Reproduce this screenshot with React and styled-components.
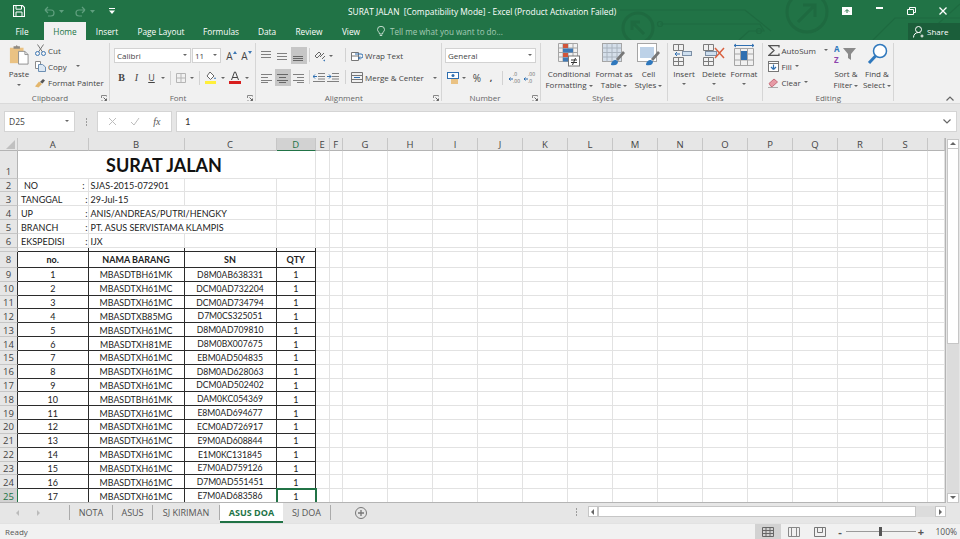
import React from 'react'
import styled, { createGlobalStyle } from 'styled-components'

const GREEN = '#217346'
const UI_FONT = '"Open Sans", "Noto Sans", sans-serif'

const Global = createGlobalStyle`
    html, body { margin: 0; padding: 0; background: #e6e6e6; }
    * { box-sizing: border-box; }
`

const Page = styled.div`
    width: 960px;
    height: 539px;
    display: flex;
    flex-direction: column;
    overflow: hidden;
    font-family: ${UI_FONT};
    color: #444;
    background: #e6e6e6;
`

/* title bar */
const TitleBar = styled.div`
    position: relative;
    height: 22px;
    display: grid;
    grid-template-columns: 348px 1fr auto;
    align-items: center;
    color: #fff;
`
const Circuit = styled.svg`
    position: absolute;
    left: 600px;
    top: 0;
    pointer-events: none;
`
const Header = styled.div`
    position: relative;
    background: ${GREEN};
    overflow: hidden;
    flex: none;
`
const Qat = styled.div`
    display: flex;
    align-items: center;
    padding-left: 13px;
    position: relative;
`
const QatSlot = styled.div`
    width: ${p => p.$w}px;
    display: flex;
    align-items: center;
`
const WindowTitle = styled.div`
    font-size: 8.4px;
    white-space: pre;
    position: relative;
`
const WinControls = styled.div`
    display: flex;
    position: relative;
    padding-right: 1px;
`
const WinBtn = styled.div`
    width: 32px;
    display: flex;
    justify-content: center;
`
const TabRow = styled.div`
    height: 18px;
    display: flex;
    align-items: stretch;
    position: relative;
`
const Tab = styled.div`
    width: ${p => p.$w}px;
    display: flex;
    align-items: center;
    justify-content: center;
    padding-top: 1px;
    font-size: 8.3px;
    color: ${p => (p.$active ? GREEN : '#fff')};
    background: ${p => (p.$active ? '#f1f1f1' : 'transparent')};
`
const TellMe = styled.div`
    display: flex;
    align-items: center;
    gap: 5px;
    padding: 1px 0 0 7px;
    font-size: 8.1px;
    color: #a6cbb6;
`
const Share = styled.div`
    margin-left: auto;
    width: 52px;
    margin-top: 1px;
    background: #1b5e3a;
    color: #fff;
    font-size: 8px;
    display: flex;
    align-items: center;
    gap: 3px;
    padding-left: 5px;
`

/* ribbon */
const Ribbon = styled.div`
    position: relative;
    height: 64px;
    background: #f1f1f1;
    display: flex;
    flex: none;
    border-bottom: 1px solid #dadada;
`
const Group = styled.div`
    width: ${p => p.$w}px;
    flex: none;
    display: flex;
    flex-direction: column;
    position: relative;
    &::after {
        content: '';
        position: absolute;
        right: 0;
        top: 3px;
        bottom: 2px;
        width: 1px;
        background: #d6d6d6;
    }
`
const GroupBody = styled.div`
    height: 52px;
    display: flex;
    gap: ${p => p.$gap || 0}px;
    padding: ${p => p.$top || 0}px 0 0 ${p => p.$left || 0}px;
`
const GroupLabel = styled.div`
    height: 11px;
    font-size: 8px;
    line-height: 12px;
    color: #666;
    text-align: center;
    position: relative;
    padding-right: ${p => p.$shift || 0}px;
`
const Launcher = styled.svg`
    position: absolute;
    right: 3px;
    top: 3px;
`
const Caret = styled.span`
    display: inline-block;
    width: 0;
    height: 0;
    flex: none;
    margin: ${p => p.$m || '0 0 1px 3px'};
    border-left: 2.5px solid transparent;
    border-right: 2.5px solid transparent;
    border-top: 2.5px solid #666;
`
const PasteCol = styled.div`
    width: 30px;
    display: flex;
    flex-direction: column;
    align-items: center;
    padding-top: 4px;
    font-size: 8px;
    line-height: 11px;
    color: #444;
    & > svg { margin-bottom: 2px; }
`
const SmallCol = styled.div`
    display: flex;
    flex-direction: column;
    padding-top: 2px;
    width: ${p => p.$w || 'auto'};
`
const SmallRow = styled.div`
    height: 16px;
    display: flex;
    align-items: center;
    gap: 2px;
    font-size: 8px;
    white-space: nowrap;
    color: #444;
`
const IconSlot = styled.span`
    width: ${p => p.$w || 12}px;
    display: flex;
    justify-content: center;
    flex: none;
`
const ToolRows = styled.div`
    display: flex;
    flex-direction: column;
    gap: 5px;
`
const ToolRow = styled.div`
    display: flex;
    align-items: center;
    height: 17px;
`
const Combo = styled.div`
    width: ${p => p.$w}px;
    height: 15px;
    margin-left: ${p => p.$ml || 0}px;
    background: #fff;
    border: 1px solid #d2d2d2;
    display: flex;
    align-items: center;
    justify-content: space-between;
    padding: 0 3px 0 2px;
    font-size: 8px;
    color: #444;
`
const Tool = styled.div`
    width: ${p => p.$w || 15}px;
    height: 17px;
    flex: none;
    display: flex;
    align-items: center;
    justify-content: center;
    font-size: ${p => p.$size || 9}px;
    font-weight: ${p => (p.$bold ? 700 : 400)};
    font-style: ${p => (p.$italic ? 'italic' : 'normal')};
    text-decoration: ${p => (p.$under ? 'underline' : 'none')};
    font-family: ${p => (p.$serif ? '"Liberation Serif", serif' : UI_FONT)};
    color: #444;
    background: ${p => (p.$on ? '#c6c6c6' : 'transparent')};
`
const GrowBox = styled.div`
    display: flex;
    margin-left: 3px;
`
const Sep = styled.div`
    width: 1px;
    height: 14px;
    margin: 0 ${p => p.$m || 4}px;
    flex: none;
    background: #d2d2d2;
`
const SepCol = styled.div`
    display: flex;
    flex-direction: column;
    gap: 8px;
    padding-top: 1px;
`
const BigBtn = styled.div`
    width: ${p => p.$w}px;
    flex: none;
    display: flex;
    flex-direction: column;
    align-items: center;
    padding-top: 3px;
    font-size: 8px;
    line-height: 11px;
    color: #444;
    text-align: center;
    white-space: nowrap;
`
const BigIcon = styled.div`
    height: 24.5px;
    display: flex;
    align-items: flex-start;
    justify-content: center;
`
const Collapse = styled.svg`
    position: absolute;
    right: 6px;
    bottom: 2px;
`

/* formula bar */
const FormulaBar = styled.div`
    height: 34px;
    padding: 7px 3px 6px 4px;
    display: flex;
    align-items: stretch;
    background: #e6e6e6;
    flex: none;
`
const NameBox = styled.div`
    width: 71px;
    background: #fff;
    border: 1px solid #d4d4d4;
    display: flex;
    align-items: center;
    justify-content: space-between;
    padding: 0 5px 0 4px;
    font-size: 8.5px;
    color: #444;
`
const Dots = styled.div`
    width: 22px;
    display: flex;
    flex-direction: column;
    align-items: center;
    justify-content: center;
    gap: 1px;
    & > i { width: 1px; height: 2px; background: #9c9c9c; }
`
const FxBox = styled.div`
    width: 75px;
    background: #fff;
    border: 1px solid #d4d4d4;
    display: flex;
    align-items: center;
    justify-content: space-around;
    padding: 0 4px;
`
const Fx = styled.span`
    font: italic 10px "Liberation Serif", serif;
    color: #555;
`
const FormulaInput = styled.div`
    flex: 1;
    margin-left: 4px;
    background: #fff;
    border: 1px solid #d4d4d4;
    display: flex;
    align-items: center;
    justify-content: space-between;
    padding: 0 5px 0 8px;
    font: 9.5px Lato, sans-serif;
    color: #333;
`

/* sheet */
const SheetArea = styled.div`
    height: 365px;
    display: flex;
    background: #e6e6e6;
    flex: none;
`
const Grid = styled.div`
    width: 946px;
    height: 365px;
    overflow: hidden;
    display: grid;
    grid-template-columns: 18px 70.5px 96px 92px 39.5px 13.5px 13.5px repeat(13, 45px) 1fr;
    grid-template-rows: 13px 27.5px repeat(5, 13.9px) 4px 16px repeat(17, 13.83px);
    background: #fff;
    border-right: 1px solid #b4b4b4;
    border-bottom: 1px solid #b4b4b4;
    font-family: Lato, sans-serif;
    font-size: 9px;
    color: #222;
`
const ColHead = styled.div`
    background: ${p => (p.$sel ? '#d2d2d2' : '#e6e6e6')};
    border-right: 1px solid #c6c6c6;
    border-bottom: 1px solid ${p => (p.$sel ? GREEN : '#b4b4b4')};
    color: ${p => (p.$sel ? GREEN : '#444')};
    font: 9.5px ${UI_FONT};
    display: flex;
    align-items: center;
    justify-content: center;
`
const Corner = styled(ColHead)`
    position: relative;
    &::after {
        content: '';
        position: absolute;
        right: 2px;
        bottom: 1px;
        border-left: 9px solid transparent;
        border-bottom: 9px solid #c0c0c0;
    }
`
const RowHead = styled.div`
    background: ${p => (p.$sel ? '#d2d2d2' : '#e6e6e6')};
    border-right: 1px solid ${p => (p.$sel ? GREEN : p.$dark ? '#2b2b2b' : '#b4b4b4')};
    border-bottom: 1px solid #c6c6c6;
    color: ${p => (p.$sel ? GREEN : '#444')};
    font: 9.5px ${UI_FONT};
    padding-top: 1px;
    display: flex;
    align-items: ${p => (p.$low ? 'flex-end' : 'center')};
    justify-content: center;
    overflow: hidden;
`
const Cell = styled.div`
    grid-column: span ${p => p.$span || 1};
    border-right: 1px solid ${p => (p.$boxed ? '#2b2b2b' : '#e2e2e2')};
    border-bottom: 1px solid ${p => (p.$boxed ? '#2b2b2b' : '#e2e2e2')};
    display: flex;
    align-items: center;
    justify-content: ${p => (p.$center ? 'center' : 'flex-start')};
    font-weight: ${p => (p.$bold ? 700 : 400)};
    font-size: ${p => p.$size || 9}px;
    white-space: nowrap;
    padding: 1px 0 0 ${p => p.$pad || 0}px;
    position: relative;
`
const SheetTitle = styled(Cell)`
    font-size: 18px;
    font-weight: 700;
    color: #111;
    padding: 1px 5px 0 0;
`
const SelectedCell = styled(Cell)`
    outline: 2px solid ${GREEN};
    outline-offset: -1px;
    z-index: 1;
`
const Colon = styled.span`
    margin-left: auto;
    padding-right: ${p => p.$pr}px;
`
const VScroll = styled.div`
    flex: 1;
    display: flex;
    flex-direction: column;
    padding: 1px 1px 0;
`
const ScrollBtn = styled.div`
    flex: none;
    width: ${p => p.$w || 12}px;
    height: ${p => p.$h || 10}px;
    background: #fff;
    border: 1px solid #c6c6c6;
    display: flex;
    align-items: center;
    justify-content: center;
`
const VThumb = styled.div`
    width: 12px;
    height: 195px;
    background: #fff;
    border: 1px solid #c6c6c6;
    border-top: none;
`
const VTrack = styled.div`
    width: 12px;
    flex: 1;
    background: #dcdcdc;
`

/* sheet tabs */
const TabsBar = styled.div`
    height: 20px;
    display: flex;
    align-items: stretch;
    background: #e6e6e6;
    flex: none;
`
const TabNav = styled.div`
    width: 70px;
    display: flex;
    align-items: center;
    justify-content: flex-end;
    gap: 15px;
    padding-right: 27px;
    border-right: 1px solid #ababab;
    margin: 2px 0 3px;
`
const SheetTab = styled.div`
    width: ${p => p.$w}px;
    display: flex;
    align-items: center;
    justify-content: center;
    font-size: 9px;
    margin-bottom: ${p => (p.$active ? 0 : 3)}px;
    margin-top: ${p => (p.$active ? 0 : 2)}px;
    color: ${p => (p.$active ? GREEN : '#555')};
    font-weight: ${p => (p.$active ? 700 : 400)};
    background: ${p => (p.$active ? '#fff' : 'transparent')};
    border-bottom: ${p => (p.$active ? `2px solid ${GREEN}` : 'none')};
    border-right: ${p => (p.$active ? 'none' : '1px solid #ababab')};
`
const AddSheet = styled.div`
    margin-left: 24px;
    display: flex;
    align-items: center;
`
const HScroll = styled.div`
    margin-left: auto;
    width: 390px;
    display: flex;
    align-items: center;
    padding: 0 14px 3px 0;
`
const SplitDots = styled(Dots)`
    width: 12px;
    margin-right: 6px;
`
const HThumb = styled.div`
    width: 318px;
    height: 11px;
    background: #fff;
    border: 1px solid #c6c6c6;
`
const HTrack = styled.div`
    flex: 1;
    height: 11px;
    background: #dcdcdc;
`

/* status bar */
const StatusBar = styled.div`
    height: 16px;
    background: #f1f1f1;
    display: flex;
    align-items: center;
    font-size: 8px;
    color: #555;
    padding-left: 5px;
    flex: none;
    border-top: 1px solid #e2e2e2;
`
const ViewGroup = styled.div`
    margin-left: auto;
    display: flex;
    align-items: stretch;
    height: 100%;
`
const ViewBtn = styled.div`
    width: 26px;
    display: flex;
    align-items: center;
    justify-content: center;
    background: ${p => (p.$on ? '#d2d2d2' : 'transparent')};
`
const ZoomBar = styled.div`
    display: flex;
    align-items: center;
    width: 127px;
    padding-left: 4.5px;
    gap: 3px;
    font-size: 8.5px;
    color: #555;
`
const ZoomMark = styled.span`
    font-size: 11px;
    font-weight: 700;
    line-height: 1;
    width: 5px;
    display: flex;
    justify-content: center;
`
const Slider = styled.div`
    width: 70px;
    height: 1px;
    background: #9a9a9a;
    position: relative;
    & > i {
        position: absolute;
        left: 33px;
        top: -4px;
        width: 3px;
        height: 9px;
        background: #555;
    }
`
const ZoomValue = styled.span`
    margin-left: 9px;
`

/* icons */
const Ico = ({ w = 12, h = 12, children }) => (
    <svg width={w} height={h} viewBox={`0 0 ${w} ${h}`} fill="none">{children}</svg>
)

const Lines = ({ rows, on }) => (
    <Ico w={12} h={12}>
        {rows.map(([a, b, y], i) => (
            <line key={i} x1={a} x2={b} y1={y + 0.5} y2={y + 0.5} stroke={on ? '#666' : '#808080'} />
        ))}
    </Ico>
)

const SaveIcon = () => (
    <Ico w={12} h={12}>
        <path d="M.5.5h9l2 2v9H.5z" stroke="#fff" strokeWidth="1.2" />
        <path d="M3 1v3.2h5.5V1M3 11V7h6v4" stroke="#fff" />
    </Ico>
)
const UndoIcon = ({ flip }) => (
    <svg width="11" height="11" viewBox="0 0 11 11" fill="none" style={flip ? { transform: 'scaleX(-1)' } : undefined}>
        <path d="M1 4h6a3 3 0 0 1 0 6H4M1 4l3-3M1 4l3 3" stroke="#5f9f7e" strokeWidth="1.2" />
    </svg>
)
const SmallCaret = ({ color = '#5f9f7e' }) => (
    <svg width="5" height="3" viewBox="0 0 5 3" style={{ marginLeft: 4 }}><path d="M0 0h5L2.5 3z" fill={color} /></svg>
)
const QatCustom = () => (
    <svg width="6" height="6" viewBox="0 0 6 6"><path d="M0 0h6v1H0zM0 2.5h6L3 6z" fill="#fff" /></svg>
)
const Bulb = () => (
    <svg width="8" height="11" viewBox="0 0 8 11" fill="none">
        <path d="M2.5 8C2.5 6 .5 5.5.5 3.5a3.5 3.2 0 0 1 7 0C7.5 5.5 5.5 6 5.5 8zM2.8 9.5h2.4" stroke="#c4dccf" />
    </svg>
)
const PersonIcon = () => (
    <svg width="11" height="12" viewBox="0 0 11 12" fill="none">
        <circle cx="5.5" cy="3.5" r="3" stroke="#fff" />
        <path d="M.5 11.5c0-3 2-5 5-5 1 0 1.5.2 2 .5M7.5 10h3M9 8.5v3" stroke="#fff" />
    </svg>
)
const PresentIcon = () => (
    <Ico w={10} h={8}>
        <rect width="10" height="8" fill="#fff" />
        <path d="M3 4.5 5 2.5l2 2M5 3v3" stroke={GREEN} />
    </Ico>
)
const RestoreIcon = () => (
    <Ico w={9} h={8}>
        <path d="M.5 2.5h6v5h-6zM2.5 2.5v-2h6v5h-2" stroke="#fff" />
    </Ico>
)
const CloseIcon = () => (
    <Ico w={8} h={8}>
        <path d="M.5.5l7 7M7.5.5l-7 7" stroke="#fff" strokeWidth="1.3" />
    </Ico>
)
const LauncherIcon = () => (
    <Launcher width="6" height="6" viewBox="0 0 6 6" fill="none">
        <path d="M.5 3V.5h5M.5 5.5h1M5.5.5v1" stroke="#888" />
        <path d="M2.5 2.5l3 3M5.5 3.5v2h-2" stroke="#666" />
    </Launcher>
)
const PasteIcon = () => (
    <svg width="20" height="22" viewBox="0 0 22 24" fill="none">
        <path d="M1 4h15v17H1z" fill="#eac283" />
        <path d="M5 2.5h2.5L8.5 1l1 1.5H12V5H5z" fill="#8f8a83" />
        <path d="M10.5 8h7l3.5 3.5V22H10.5z" fill="#fff" stroke="#8a8a8a" />
        <path d="M17.5 8v3.5H21" stroke="#8a8a8a" />
    </svg>
)
const CutIcon = () => (
    <Ico w={11} h={12}>
        <path d="M2.5.5l5 7.5M8.5.5l-5 7.5" stroke="#777" />
        <circle cx="2.5" cy="9.5" r="2" stroke="#3f79b5" />
        <circle cx="8.5" cy="9.5" r="2" stroke="#3f79b5" />
    </Ico>
)
const CopyIcon = () => (
    <Ico w={11} h={11}>
        <path d="M.5.5h5v7h-5z" fill="#fff" stroke="#8a8a8a" />
        <path d="M3.5 3.5h4l3 2.5v4.5h-7z" fill="#dce7f2" stroke="#6c8fb3" />
    </Ico>
)
const BrushIcon = () => (
    <Ico w={12} h={11}>
        <path d="M1 9.5l4-5 3 2.5-3.5 3.5z" fill="#e3b66c" />
        <path d="M6 5l3-3 2 1.5-2.5 3z" fill="#555" />
    </Ico>
)
const GrowIcon = ({ up }) => (
    <Tool $w={15} $size={10}>
        A
        <svg width="4" height="3" viewBox="0 0 4 3" style={{ marginBottom: 6 }}>
            <path d={up ? 'M0 3l2-3 2 3z' : 'M0 0l2 3 2-3z'} fill="#3f79b5" />
        </svg>
    </Tool>
)
const BorderIcon = () => (
    <Ico w={10} h={10}>
        <path d="M.5.5h9v9h-9zM5 .5v9M.5 5h9" stroke="#b5b5b5" />
    </Ico>
)
const FillIcon = () => (
    <Ico w={12} h={13}>
        <path d="M5 1l4 4-3.5 3.5L2 5z" stroke="#666" fill="#fff" />
        <path d="M10 6l1 2h-2z" fill="#3f79b5" />
        <rect y="10" width="11" height="3" fill="#ffef3a" />
    </Ico>
)
const FontColorIcon = () => (
    <Ico w={12} h={13}>
        <path d="M2.5 9l3-8h1l3 8M4 6.5h4" stroke="#444" />
        <rect y="10" width="12" height="3" fill="#d81e1e" />
    </Ico>
)
const OrientIcon = () => (
    <Ico w={12} h={12}>
        <path d="M1 6l4-4 2 2-4 4zM6 7l4-4M8 9l3-3" stroke="#666" />
        <path d="M9 10.5l2-1v2z" fill="#3f79b5" />
    </Ico>
)
const IndentIcon = ({ out }) => (
    <Ico w={12} h={11}>
        <path d="M5 1.5h7M5 4.5h7M5 7h7M0 9.5h12" stroke="#808080" />
        <path d={out ? 'M0 4.5h4M0 4.5l2-2M0 4.5l2 2' : 'M0 4.5h4M4 4.5l-2-2M4 4.5l-2 2'} stroke="#2f6fb0" />
    </Ico>
)
const WrapIcon = () => (
    <Ico w={12} h={12}>
        <path d="M.5 2.5h7v8h-7zM.5 6h7" stroke="#777" fill="#fff" />
        <path d="M4 4h6a1.5 1.5 0 0 1 0 4H7.5M7.5 8L9 6.5M7.5 8L9 9.5" stroke="#2f6fb0" />
    </Ico>
)
const MergeIcon = () => (
    <Ico w={12} h={11}>
        <path d="M.5.5h11v10H.5zM.5 3.5h11M.5 7.5h11" stroke="#777" />
        <path d="M3 5.5h6" stroke="#2f6fb0" />
    </Ico>
)
const AccountingIcon = () => (
    <Ico w={12} h={12}>
        <rect x=".5" y=".5" width="11" height="6" fill="#fff" stroke="#2f6fb0" />
        <circle cx="6" cy="3.5" r="1.5" fill="#2f6fb0" />
        <rect x="4" y="7" width="7" height="5" fill="#eac283" />
    </Ico>
)
const DecimalIcon = ({ more }) => (
    <svg width="14" height="13" viewBox="0 0 14 13" fill="none">
        <text x="4" y="5" fontSize="5" fill="#666" fontFamily="Open Sans">{more ? '.00' : '.0'}</text>
        <text x="4" y="12" fontSize="5" fill="#666" fontFamily="Open Sans">{more ? '.0' : '.00'}</text>
        <path d="M0 8h4M0 8l1.5-1.5M0 8l1.5 1.5" stroke="#2f6fb0" />
    </svg>
)
const CondIcon = () => (
    <Ico w={22} h={24}>
        <path d="M.5.5h19v18H.5zM.5 5h19M.5 9.5h19M.5 14h19M5 .5v18M10 .5v18M15 .5v18" stroke="#a5a5a5" />
        <rect x="5" y="1" width="5" height="4" fill="#d1553a" />
        <rect x="5" y="5.5" width="10" height="4" fill="#3f79b5" />
        <rect x="5" y="10" width="5" height="4" fill="#d1553a" />
        <rect x="5" y="14.5" width="5" height="4" fill="#3f79b5" />
        <rect x="10.5" y="13" width="11" height="10" fill="#fff" stroke="#777" />
        <path d="M13 17h6M13 19.5h6M17.5 15l-3 7" stroke="#333" />
    </Ico>
)
const FormatTableIcon = ({ cell }) => (
    <Ico w={24} h={24}>
        <rect x=".5" y=".5" width="19" height="18" fill={cell ? '#fff' : '#d5dfea'} stroke="#a5a5a5" />
        {cell
            ? <rect x="3" y="4" width="14" height="11" fill="#bdd2e8" />
            : <path d="M.5 5h19M.5 9.5h19M.5 14h19M5 .5v18M10 .5v18M15 .5v18" stroke="#aab4bf" />}
        <path d="M14 16l7-8 2 2-7 8z" fill="#777" />
        <path d="M9 22c0-3 2-5 5-5l2 1.5c0 2.5-2 4.5-7 3.5z" fill="#2f78bd" />
    </Ico>
)
const CellOpIcon = ({ kind }) => (
    <Ico w={28} h={24}>
        <path d="M3.5 1.5h10v6h-10zM8.5 1.5v6" stroke="#7c7c7c" />
        <path d="M3.5 14.5h10v8h-10zM8.5 14.5v8M3.5 18.5h10" stroke="#7c7c7c" />
        {kind === 'insert' && <path d="M5 11h5M5 11l2-2M5 11l2 2" stroke="#2f6fb0" />}
        {kind === 'insert' && <rect x="12.5" y="8.5" width="9" height="4" stroke="#7c8fa5" fill="#cfe0f0" />}
        {kind === 'delete' && <rect x="5.5" y="8.5" width="11" height="4" stroke="#7c8fa5" fill="#cfe0f0" />}
        {kind === 'delete' && <path d="M15 5l9 10M24 5l-9 10" stroke="#d9603f" strokeWidth="1.5" />}
    </Ico>
)
const CellFormatIcon = () => (
    <Ico w={24} h={24}>
        <path d="M2 2.5h20M2 2.5L4 1M2 2.5L4 4M22 2.5L20 1M22 2.5L20 4" stroke="#2f6fb0" />
        <path d="M2.5 5.5h19v17h-19zM8.5 5.5v17M15.5 5.5v17M2.5 11h19M2.5 17h19" stroke="#a5a5a5" />
        <rect x="9" y="8" width="6" height="9" fill="#2f6fb0" />
    </Ico>
)
const SigmaIcon = () => (
    <Ico w={12} h={11}>
        <path d="M11 2.5V.7H1l5 4.8-5 4.8h10V8.500" stroke="#555" strokeWidth="1.3" />
    </Ico>
)
const FillDownIcon = () => (
    <Ico w={11} h={11}>
        <rect x=".5" y=".5" width="10" height="10" fill="#fff" stroke="#777" />
        <path d="M.5 2.5h10" stroke="#777" />
        <path d="M5.5 3.5v5M5.5 8.5L3 6M5.5 8.5L8 6" stroke="#2f6fb0" strokeWidth="1.2" />
    </Ico>
)
const EraserIcon = () => (
    <Ico w={11} h={11}>
        <path d="M1 6.5l5-4.5 3.5 3-5 4.5H3z" fill="#e79aa5" stroke="#c66d7b" />
        <path d="M0 10.5h10" stroke="#aaa" />
    </Ico>
)
const SortIcon = () => (
    <svg width="24" height="23" viewBox="0 0 24 23" fill="none">
        <text x="0" y="9" fontSize="8" fontWeight="700" fill="#2f78bd" fontFamily="Open Sans">A</text>
        <text x="0" y="20" fontSize="8" fontWeight="700" fill="#8e44ad" fontFamily="Open Sans">Z</text>
        <path d="M9 5h13l-5 6v6l-3-2v-4z" fill="#8a8a8a" />
    </svg>
)
const FindIcon = () => (
    <Ico w={21} h={22}>
        <circle cx="13" cy="8" r="6.5" stroke="#2f78bd" strokeWidth="1.5" fill="#fff" />
        <path d="M8.5 13L2 20" stroke="#2f78bd" strokeWidth="3" />
    </Ico>
)
const ChevronUp = () => (
    <Collapse width="8" height="5" viewBox="0 0 8 5" fill="none">
        <path d="M.5 4.5 4 1l3.5 3.5" stroke="#666" strokeWidth="1.2" />
    </Collapse>
)
const Arrow = ({ dir, color = '#666' }) => {
    const d = { up: 'M0 4l3-3 3 3z', down: 'M0 1l3 3 3-3z', left: 'M4 0L1 3l3 3z', right: 'M1 0l3 3-3 3z' }
    return <svg width="6" height="6" viewBox="0 0 6 6"><path d={d[dir]} fill={color} /></svg>
}
const PlusCircle = () => (
    <Ico w={12} h={12}>
        <circle cx="6" cy="6" r="5.5" stroke="#777" />
        <path d="M6 3v6M3 6h6" stroke="#777" strokeWidth="1.3" />
    </Ico>
)
const NormalViewIcon = () => (
    <Ico w={12} h={10}>
        <path d="M.5.5h11v9H.5zM4 .5v9M8 .5v9M.5 3.5h11M.5 6.5h11" stroke="#666" />
    </Ico>
)
const LayoutViewIcon = () => (
    <Ico w={12} h={10}>
        <path d="M.5.5h11v9H.5zM3.5.5v9M8.5.5v9" stroke="#888" />
    </Ico>
)
const BreakViewIcon = () => (
    <Ico w={12} h={10}>
        <path d="M.5.5h11v9H.5zM3.5.5v5h5v-5" stroke="#777" />
    </Ico>
)
const CircuitArt = () => (
    <Circuit width="360" height="40" viewBox="0 0 360 40" fill="none">
        <g stroke="#1e6a40" strokeWidth="1.2">
            <path d="M20 10h125l26 21M60 24h100l4 7h-15l-10 9" />
            <circle cx="60" cy="24" r="2.5" />
            <circle cx="159" cy="31" r="2.5" />
            <path d="M273 40l22-22h65M320 40l40-36" />
        </g>
        <g stroke="#1e6a40" strokeWidth="3">
            <circle cx="207" cy="12" r="20" />
            <path d="M198 22l17-17M203 5h12v12" />
            <circle cx="38" cy="28" r="15" />
            <path d="M44 34L32 22M32 30v-8h8" />
        </g>
    </Circuit>
)

/* data */
const columns = ['A', 'B', 'C', 'D', 'E', 'F', 'G', 'H', 'I', 'J', 'K', 'L', 'M', 'N', 'O', 'P', 'Q', 'R', 'S', '']

const info = [
    { row: 2, label: 'NO', value: 'SJAS-2015-072901', pad: 6, colonPad: 3 },
    { row: 3, label: 'TANGGAL', value: '29-Jul-15', pad: 3 },
    { row: 4, label: 'UP', value: 'ANIS/ANDREAS/PUTRI/HENGKY', pad: 3, span: 2 },
    { row: 5, label: 'BRANCH', value: 'PT. ASUS SERVISTAMA KLAMPIS', pad: 3, span: 2 },
    { row: 6, label: 'EKSPEDISI', value: 'IJX', pad: 3 },
]

const items = [
    ['MBASDTBH61MK', 'D8M0AB638331'],
    ['MBASDTXH61MC', 'DCM0AD732204'],
    ['MBASDTXH61MC', 'DCM0AD734794'],
    ['MBASDTXB85MG', 'D7M0CS325051'],
    ['MBASDTXH61MC', 'D8M0AD709810'],
    ['MBASDTXH81ME', 'D8M0BX007675'],
    ['MBASDTXH61MC', 'EBM0AD504835'],
    ['MBASDTXH61MC', 'D8M0AD628063'],
    ['MBASDTXH61MC', 'DCM0AD502402'],
    ['MBASDTBH61MK', 'DAM0KC054369'],
    ['MBASDTXH61MC', 'E8M0AD694677'],
    ['MBASDTXH61MC', 'ECM0AD726917'],
    ['MBASDTXH61MC', 'E9M0AD608844'],
    ['MBASDTXH61MC', 'E1M0KC131845'],
    ['MBASDTXH61MC', 'E7M0AD759126'],
    ['MBASDTXH61MC', 'D7M0AD551451'],
    ['MBASDTXH61MC', 'E7M0AD683586'],
]

const blanks = (count, key) => Array.from({ length: count }, (_, i) => <Cell key={`${key}-${i}`} />)

const Sheet = () => (
    <Grid>
        <Corner />
        {columns.map((c, i) => <ColHead key={i} $sel={c === 'D'}>{c}</ColHead>)}

        <RowHead $low>1</RowHead>
        <SheetTitle $span={4} $center>SURAT JALAN</SheetTitle>
        {blanks(16, 'r1')}

        {info.map(r => (
            <React.Fragment key={r.row}>
                <RowHead>{r.row}</RowHead>
                <Cell $pad={r.pad}>{r.label}<Colon $pr={r.colonPad || 0}>:</Colon></Cell>
                <Cell $span={r.span} $pad={2}>{r.value}</Cell>
                {blanks(r.span ? 17 : 18, `r${r.row}`)}
            </React.Fragment>
        ))}

        <RowHead />
        <Cell $boxed /><Cell $boxed /><Cell $boxed /><Cell $boxed />
        {blanks(16, 'r7')}

        <RowHead $dark>8</RowHead>
        <Cell $boxed $center $bold>no.</Cell>
        <Cell $boxed $center $bold>NAMA BARANG</Cell>
        <Cell $boxed $center $bold>SN</Cell>
        <Cell $boxed $center $bold>QTY</Cell>
        {blanks(16, 'r8')}

        {items.map(([name, sn], i) => {
            const last = i === items.length - 1
            const QtyCell = last ? SelectedCell : Cell
            return (
                <React.Fragment key={i}>
                    <RowHead $dark $sel={last}>{i + 9}</RowHead>
                    <Cell $boxed $center>{i + 1}</Cell>
                    <Cell $boxed $center $size={8.8}>{name}</Cell>
                    <Cell $boxed $center $size={8.6}>{sn}</Cell>
                    <QtyCell $boxed $center>1</QtyCell>
                    {blanks(16, `d${i}`)}
                </React.Fragment>
            )
        })}
    </Grid>
)

const TopBar = () => (
    <Header>
        <CircuitArt />
        <TitleBar>
            <Qat>
                <QatSlot $w={31}><SaveIcon /></QatSlot>
                <QatSlot $w={31}><UndoIcon /><SmallCaret /></QatSlot>
                <QatSlot $w={34}><UndoIcon flip /><SmallCaret /></QatSlot>
                <QatSlot $w={10}><QatCustom /></QatSlot>
            </Qat>
            <WindowTitle>{'SURAT JALAN  [Compatibility Mode] - Excel (Product Activation Failed)'}</WindowTitle>
            <WinControls>
                <WinBtn><PresentIcon /></WinBtn>
                <WinBtn><Ico w={7} h={2}><rect width="7" height="2" fill="#fff" /></Ico></WinBtn>
                <WinBtn><RestoreIcon /></WinBtn>
                <WinBtn><CloseIcon /></WinBtn>
            </WinControls>
        </TitleBar>
        <TabRow>
            <Tab $w={44}>File</Tab>
            <Tab $w={42} $active>Home</Tab>
            <Tab $w={42}>Insert</Tab>
            <Tab $w={66}>Page Layout</Tab>
            <Tab $w={54}>Formulas</Tab>
            <Tab $w={38}>Data</Tab>
            <Tab $w={46}>Review</Tab>
            <Tab $w={38}>View</Tab>
            <TellMe><Bulb />Tell me what you want to do...</TellMe>
            <Share><PersonIcon />Share</Share>
        </TabRow>
    </Header>
)

const RibbonBar = () => (
    <Ribbon>
        <Group $w={110}>
            <GroupBody $left={4}>
                <PasteCol>
                    <PasteIcon />
                    <span>Paste</span>
                    <Caret $m="5px 0 0" />
                </PasteCol>
                <SmallCol>
                    <SmallRow><IconSlot><CutIcon /></IconSlot>Cut</SmallRow>
                    <SmallRow><IconSlot><CopyIcon /></IconSlot>Copy<Caret $m="0 0 0 7px" /></SmallRow>
                    <SmallRow><IconSlot><BrushIcon /></IconSlot>Format Painter</SmallRow>
                </SmallCol>
            </GroupBody>
            <GroupLabel $shift={10}>Clipboard<LauncherIcon /></GroupLabel>
        </Group>

        <Group $w={146}>
            <GroupBody $left={4} $top={7}>
                <ToolRows>
                    <ToolRow>
                        <Combo $w={77}>Calibri<Caret /></Combo>
                        <Combo $w={29} $ml={1}>11<Caret /></Combo>
                        <GrowBox>
                            <GrowIcon up />
                            <GrowIcon />
                        </GrowBox>
                    </ToolRow>
                    <ToolRow>
                        <Tool $bold $serif $size={10}>B</Tool>
                        <Tool $italic $serif $size={10}>I</Tool>
                        <Tool $under $size={9}>U</Tool>
                        <Caret $m="0 2px" />
                        <Sep $m={2.5} />
                        <Tool><BorderIcon /></Tool>
                        <Caret $m="0 2px" />
                        <Sep $m={3} />
                        <Tool $w={16}><FillIcon /></Tool>
                        <Caret $m="0 2px" />
                        <Tool $w={16}><FontColorIcon /></Tool>
                        <Caret $m="0 2px" />
                    </ToolRow>
                </ToolRows>
            </GroupBody>
            <GroupLabel $shift={10}>Font<LauncherIcon /></GroupLabel>
        </Group>

        <Group $w={185.5}>
            <GroupBody $left={3} $top={7}>
                <ToolRows>
                    <ToolRow>
                        <Tool $w={16}><Lines rows={[[0, 10, 1], [0, 10, 4], [0, 10, 7]]} /></Tool>
                        <Tool $w={16}><Lines rows={[[0, 10, 3], [0, 10, 6], [0, 10, 9]]} /></Tool>
                        <Tool $w={16} $on><Lines on rows={[[0, 10, 6], [0, 10, 8], [0, 10, 10]]} /></Tool>
                    </ToolRow>
                    <ToolRow>
                        <Tool $w={16}><Lines rows={[[0, 11, 2], [0, 7, 5], [0, 11, 8], [0, 7, 10]]} /></Tool>
                        <Tool $w={16} $on><Lines on rows={[[0, 11, 2], [2, 9, 5], [0, 11, 8], [2, 9, 10]]} /></Tool>
                        <Tool $w={16}><Lines rows={[[0, 11, 2], [4, 11, 5], [0, 11, 8], [4, 11, 10]]} /></Tool>
                    </ToolRow>
                </ToolRows>
                <SepCol><Sep $m={2} /><Sep $m={2} /></SepCol>
                <ToolRows>
                    <ToolRow>
                        <Tool $w={16}><OrientIcon /></Tool>
                        <Caret $m="0 0 0 1px" />
                    </ToolRow>
                    <ToolRow>
                        <Tool $w={14}><IndentIcon out /></Tool>
                        <Tool $w={14}><IndentIcon /></Tool>
                    </ToolRow>
                </ToolRows>
                <SepCol><Sep $m={5} /><Sep $m={5} /></SepCol>
                <ToolRows>
                    <ToolRow><SmallRow><IconSlot><WrapIcon /></IconSlot>Wrap Text</SmallRow></ToolRow>
                    <ToolRow><SmallRow><IconSlot><MergeIcon /></IconSlot>Merge &amp; Center<Caret $m="0 0 0 7px" /></SmallRow></ToolRow>
                </ToolRows>
            </GroupBody>
            <GroupLabel $shift={10}>Alignment<LauncherIcon /></GroupLabel>
        </Group>

        <Group $w={99}>
            <GroupBody $left={3.5} $top={7}>
                <ToolRows>
                    <ToolRow><Combo $w={91}>General<Caret /></Combo></ToolRow>
                    <ToolRow>
                        <Tool $w={16}><AccountingIcon /></Tool>
                        <Caret $m="0 3px 0 1px" />
                        <Tool $w={16} $size={10}>%</Tool>
                        <Tool $w={12} $bold $size={9}>,</Tool>
                        <Sep $m={5} />
                        <Tool $w={15}><DecimalIcon /></Tool>
                        <Tool $w={15}><DecimalIcon more /></Tool>
                    </ToolRow>
                </ToolRows>
            </GroupBody>
            <GroupLabel $shift={12}>Number<LauncherIcon /></GroupLabel>
        </Group>

        <Group $w={127}>
            <GroupBody $left={4.5} $gap={2}>
                <BigBtn $w={48}>
                    <BigIcon><CondIcon /></BigIcon>
                    Conditional
                    <span>Formatting<Caret $m="0 0 1px 2px" /></span>
                </BigBtn>
                <BigBtn $w={38}>
                    <BigIcon><FormatTableIcon /></BigIcon>
                    Format as
                    <span>Table<Caret $m="0 0 1px 2px" /></span>
                </BigBtn>
                <BigBtn $w={27}>
                    <BigIcon><FormatTableIcon cell /></BigIcon>
                    Cell
                    <span>Styles<Caret $m="0 0 1px 2px" /></span>
                </BigBtn>
            </GroupBody>
            <GroupLabel $shift={2}>Styles</GroupLabel>
        </Group>

        <Group $w={95}>
            <GroupBody $left={2.5} $gap={2}>
                <BigBtn $w={28}>
                    <BigIcon><CellOpIcon kind="insert" /></BigIcon>
                    Insert
                    <Caret $m="4px 0" />
                </BigBtn>
                <BigBtn $w={28}>
                    <BigIcon><CellOpIcon kind="delete" /></BigIcon>
                    Delete
                    <Caret $m="4px 0" />
                </BigBtn>
                <BigBtn $w={28}>
                    <BigIcon><CellFormatIcon /></BigIcon>
                    Format
                    <Caret $m="4px 0" />
                </BigBtn>
            </GroupBody>
            <GroupLabel>Cells</GroupLabel>
        </Group>

        <Group $w={131.5}>
            <GroupBody $left={5}>
                <SmallCol $w="63px">
                    <SmallRow><IconSlot><SigmaIcon /></IconSlot>AutoSum<Caret $m="0 0 0 6px" /></SmallRow>
                    <SmallRow><IconSlot><FillDownIcon /></IconSlot>Fill<Caret $m="0 0 0 1px" /></SmallRow>
                    <SmallRow><IconSlot><EraserIcon /></IconSlot>Clear<Caret $m="0 0 0 1px" /></SmallRow>
                </SmallCol>
                <BigBtn $w={31}>
                    <BigIcon><SortIcon /></BigIcon>
                    Sort &amp;
                    <span>Filter<Caret $m="0 0 1px 2px" /></span>
                </BigBtn>
                <BigBtn $w={31}>
                    <BigIcon><FindIcon /></BigIcon>
                    Find &amp;
                    <span>Select<Caret $m="0 0 1px 2px" /></span>
                </BigBtn>
            </GroupBody>
            <GroupLabel>Editing</GroupLabel>
        </Group>
        <ChevronUp />
    </Ribbon>
)

const App = () => (
    <Page>
        <Global />
        <TopBar />
        <RibbonBar />
        <FormulaBar>
            <NameBox>D25<Caret /></NameBox>
            <Dots><i /><i /><i /></Dots>
            <FxBox>
                <Ico w={9} h={9}><path d="M1 1l7 7M8 1L1 8" stroke="#bdbdbd" /></Ico>
                <Ico w={10} h={9}><path d="M1 5l3 3 5-7" stroke="#bdbdbd" /></Ico>
                <Fx>fx</Fx>
            </FxBox>
            <FormulaInput>
                1
                <Ico w={8} h={5}><path d="M.5.5 4 4l3.5-3.5" stroke="#666" strokeWidth="1.2" /></Ico>
            </FormulaInput>
        </FormulaBar>
        <SheetArea>
            <Sheet />
            <VScroll>
                <ScrollBtn><Arrow dir="up" /></ScrollBtn>
                <VThumb />
                <VTrack />
                <ScrollBtn><Arrow dir="down" /></ScrollBtn>
            </VScroll>
        </SheetArea>
        <TabsBar>
            <TabNav><Arrow dir="left" color="#bbb" /><Arrow dir="right" color="#bbb" /></TabNav>
            <SheetTab $w={43}>NOTA</SheetTab>
            <SheetTab $w={40}>ASUS</SheetTab>
            <SheetTab $w={67}>SJ KIRIMAN</SheetTab>
            <SheetTab $w={63} $active>ASUS DOA</SheetTab>
            <SheetTab $w={48}>SJ DOA</SheetTab>
            <AddSheet><PlusCircle /></AddSheet>
            <HScroll>
                <SplitDots><i /><i /><i /></SplitDots>
                <ScrollBtn $w={10} $h={11}><Arrow dir="left" /></ScrollBtn>
                <HThumb />
                <HTrack />
                <ScrollBtn $w={11} $h={11}><Arrow dir="right" /></ScrollBtn>
            </HScroll>
        </TabsBar>
        <StatusBar>
            Ready
            <ViewGroup>
                <ViewBtn $on><NormalViewIcon /></ViewBtn>
                <ViewBtn><LayoutViewIcon /></ViewBtn>
                <ViewBtn><BreakViewIcon /></ViewBtn>
                <ZoomBar>
                    <ZoomMark>-</ZoomMark>
                    <Slider><i /></Slider>
                    <ZoomMark>+</ZoomMark>
                    <ZoomValue>100%</ZoomValue>
                </ZoomBar>
            </ViewGroup>
        </StatusBar>
    </Page>
)

export default App
